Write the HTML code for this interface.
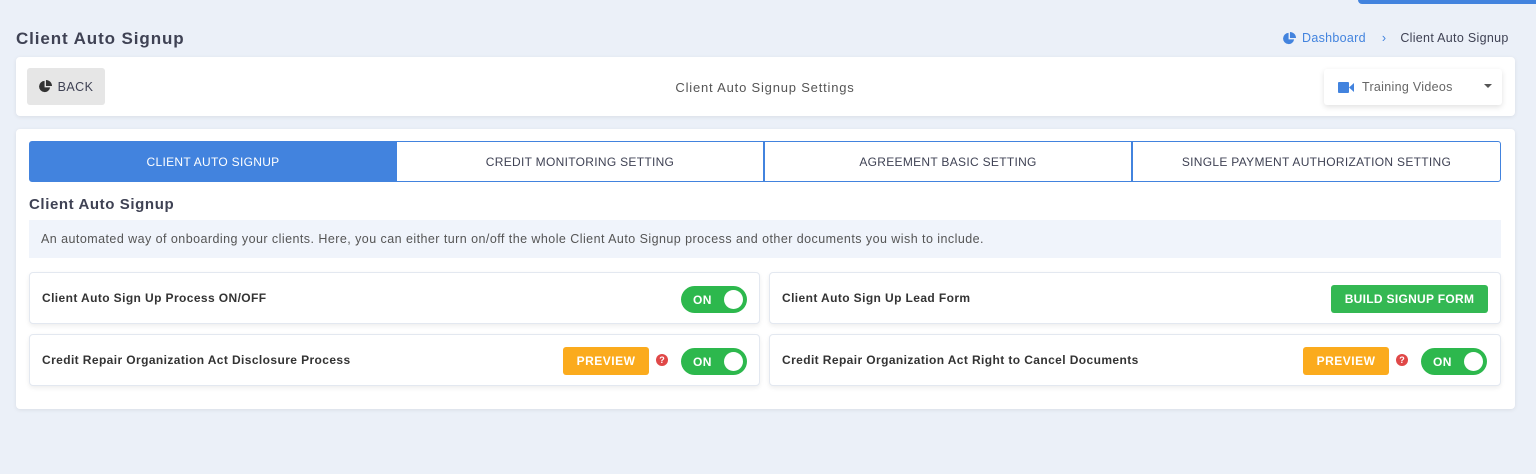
<!DOCTYPE html><html><head><style>
*{box-sizing:border-box;margin:0;padding:0}
body{width:1536px;height:474px;background:#ebf0f8;font-family:"Liberation Sans",sans-serif;position:relative;overflow:hidden;color:#3f4254}
.a{position:absolute}
.card{background:#fff;border-radius:4px;box-shadow:0 1px 4px rgba(0,0,0,.08)}
.tab{position:absolute;top:0;height:41px;width:368px;border:1px solid #4283de;display:flex;align-items:center;justify-content:center;font-size:12px;color:#3f4254;letter-spacing:.3px}
.row{position:absolute;height:52px;background:#fff;border:1px solid #e3e8f0;border-radius:4px;box-shadow:0 2px 5px rgba(0,0,0,.07);display:flex;align-items:center;padding-left:12px;font-size:12px;font-weight:bold;color:#333;letter-spacing:.4px}
.tg{position:absolute;width:66px;height:27px;border-radius:14px;background:#2db84d;color:#fff;font-size:12px;font-weight:bold;top:13px}
.tg span{position:absolute;left:12px;top:7px}
.tg i{position:absolute;right:4px;top:4px;width:19px;height:19px;border-radius:50%;background:#fff}
.pv{position:absolute;top:12px;width:86px;height:28px;background:#fbab1d;border-radius:3px;color:#fff;font-size:12px;font-weight:bold;display:flex;align-items:center;justify-content:center;letter-spacing:.5px}
.q{position:absolute;top:19px;width:12px;height:12px;border-radius:50%;background:#e04848;color:#fff;font-size:9px;font-weight:bold;text-align:center;line-height:12px;letter-spacing:0}
</style></head><body>
<div class="a" style="left:1358px;top:0;width:178px;height:4px;background:#4283de;border-radius:0 0 0 4px"></div>
<div class="a" style="left:16px;top:29px;font-size:17px;font-weight:bold;color:#3f4254;letter-spacing:.9px">Client Auto Signup</div>
<div class="a" style="left:1283px;top:31px;font-size:12.5px;color:#4283de;display:flex;align-items:center;gap:6px;letter-spacing:.3px"><svg width="13" height="13" viewBox="0 0 14 14"><path d="M6 1a6 6 0 1 0 6 7H6z" fill="#4283de"/><path d="M7.5 0v6.5H14A6.5 6.5 0 0 0 7.5 0z" fill="#4283de"/></svg>Dashboard<span style="margin-left:10px;color:#4283de">›</span><span style="color:#3f4254;margin-left:8px">Client Auto Signup</span></div>
<div class="card a" style="left:16px;top:57px;width:1499px;height:59px"></div>
<div class="a" style="left:27px;top:68px;width:78px;height:37px;background:#e6e6e6;border-radius:3px;font-size:12.5px;color:#3f4254;display:flex;align-items:center;justify-content:center;gap:6px;letter-spacing:.4px"><svg width="13" height="13" viewBox="0 0 14 14"><path d="M6 1a6 6 0 1 0 6 7H6z" fill="#333"/><path d="M7.5 0v6.5H14A6.5 6.5 0 0 0 7.5 0z" fill="#333"/></svg>BACK</div>
<div class="a" style="left:0;width:1530px;top:80px;text-align:center;font-size:13px;color:#555;letter-spacing:.8px">Client Auto Signup Settings</div>
<div class="a" style="left:1324px;top:69px;width:178px;height:36px;background:#fff;border-radius:3px;box-shadow:0 2px 6px rgba(0,0,0,.12);font-size:12.5px;color:#666;display:flex;align-items:center;padding-left:14px;gap:8px;letter-spacing:.3px"><svg width="16" height="11" viewBox="0 0 16 11"><rect width="11" height="11" rx="1" fill="#4283de"/><path d="M11 5.5L16 1v9z" fill="#4283de"/></svg>Training Videos<span style="position:absolute;right:10px;top:15px;border:4px solid transparent;border-top:4px solid #555;border-bottom:0"></span></div>
<div class="card a" style="left:16px;top:129px;width:1499px;height:280px"></div>
<div class="a" style="left:29px;top:141px;width:1472px;height:41px">
<div class="tab" style="left:0;background:#4283de;color:#fff;border-radius:3px 0 0 3px">CLIENT AUTO SIGNUP</div>
<div class="tab" style="left:367px">CREDIT MONITORING SETTING</div>
<div class="tab" style="left:735px">AGREEMENT BASIC SETTING</div>
<div class="tab" style="left:1103px;width:369px;border-radius:0 3px 3px 0">SINGLE PAYMENT AUTHORIZATION SETTING</div>
</div>
<div class="a" style="left:29px;top:196px;font-size:15px;font-weight:bold;color:#3f4254;letter-spacing:.6px">Client Auto Signup</div>
<div class="a" style="left:29px;top:220px;width:1472px;height:38px;background:#f0f4fb;font-size:12.5px;color:#555;padding:12px 12px;letter-spacing:.45px;white-space:nowrap">An automated way of onboarding your clients. Here, you can either turn on/off the whole Client Auto Signup process and other documents you wish to include.</div>
<div class="row" style="left:29px;top:272px;width:731px">Client Auto Sign Up Process ON/OFF<div class="tg" style="left:651px"><span>ON</span><i></i></div></div>
<div class="row" style="left:769px;top:272px;width:732px">Client Auto Sign Up Lead Form<div class="a" style="left:561px;top:12px;width:157px;height:28px;background:#34b853;border-radius:3px;color:#fff;font-size:12px;display:flex;align-items:center;justify-content:center;letter-spacing:.3px">BUILD SIGNUP FORM</div></div>
<div class="row" style="left:29px;top:334px;width:731px">Credit Repair Organization Act Disclosure Process<div class="pv" style="left:533px">PREVIEW</div><div class="q" style="left:626px">?</div><div class="tg" style="left:651px"><span>ON</span><i></i></div></div>
<div class="row" style="left:769px;top:334px;width:732px">Credit Repair Organization Act Right to Cancel Documents<div class="pv" style="left:533px">PREVIEW</div><div class="q" style="left:626px">?</div><div class="tg" style="left:651px"><span>ON</span><i></i></div></div>
</body></html>
